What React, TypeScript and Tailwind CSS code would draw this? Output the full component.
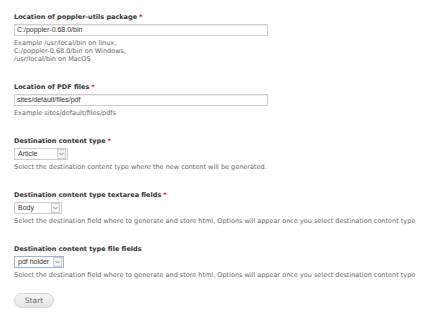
import React from "react";

const labelCls =
  "block font-['DejaVu_Sans',sans-serif] font-bold text-[6.5px] leading-[9px] text-[#333] mb-[2px]";
const descCls =
  "font-['DejaVu_Sans',sans-serif] text-[6.5px] leading-[8px] text-[#666] mt-[3px]";

function Req() {
  return <span className="text-[#e00] ml-[2px]">*</span>;
}

function Chevron() {
  return (
    <svg width="5" height="4" viewBox="0 0 5 4" fill="none" stroke="#777" strokeWidth="0.8">
      <polyline points="0.5,1 2.5,3 4.5,1" />
    </svg>
  );
}

function FakeSelect({ value, width, focused = false }: { value: string; width: string; focused?: boolean }) {
  return (
    <div
      className={
        "flex items-center h-[12px] bg-white border " +
        (focused ? "border-[#9fb6d0] " : "border-[#cfcfcf] ") +
        width
      }
    >
      <span className="flex-1 pl-[3px] font-['Liberation_Sans',Arial,sans-serif] text-[7px] leading-[10px] text-[#333] whitespace-nowrap">
        {value}
      </span>
      <span className="flex items-center justify-center w-[9px] h-[10px] mr-[1px] border border-[#cfcfcf] bg-[#f3f3f3]">
        <Chevron />
      </span>
    </div>
  );
}

function TextInput({ value }: { value: string }) {
  return (
    <div className="flex items-center w-[254px] h-[12px] bg-white border border-[#cfcfcf] shadow-[inset_0_1px_1px_rgba(0,0,0,0.08)]">
      <span className="pl-[2px] font-['Liberation_Sans',Arial,sans-serif] text-[7px] leading-[10px] text-[#333]">
        {value}
      </span>
    </div>
  );
}

export default function App() {
  return (
    <div className="w-[440px] h-[320px] bg-white overflow-hidden pl-[14px] pt-[13px]">
      <div className="flex flex-col">
        <div className="mb-[20px]">
          <label className={labelCls}>
            Location of poppler-utils package<Req />
          </label>
          <TextInput value="C:/poppler-0.68.0/bin" />
          <div className={descCls}>
            Example /usr/local/bin on linux,
            <br />
            C:/poppler-0.68.0/bin on Windows,
            <br />
            /usr/local/bin on MacOS
          </div>
        </div>

        <div className="mb-[20px]">
          <label className={labelCls}>
            Location of PDF files<Req />
          </label>
          <TextInput value="sites/default/files/pdf" />
          <div className={descCls}>Example sites/default/files/pdfs</div>
        </div>

        <div className="mb-[20px]">
          <label className={labelCls}>
            Destination content type<Req />
          </label>
          <FakeSelect value="Article" width="w-[54px]" />
          <div className={descCls}>
            Select the destination content type where the new content will be generated.
          </div>
        </div>

        <div className="mb-[20px]">
          <label className={labelCls}>
            Destination content type textarea fields<Req />
          </label>
          <FakeSelect value="Body" width="w-[48px]" />
          <div className={descCls}>
            Select the destination field where to generate and store html, Options will appear once you select
            destination content type
          </div>
        </div>

        <div>
          <label className={labelCls}>Destination content type file fields</label>
          <FakeSelect value="pdf holder" width="w-[50px]" focused />
          <div className={descCls}>
            Select the destination field where to generate and store html, Options will appear once you select
            destination content type
          </div>
        </div>

        <div className="flex mt-[14px]">
          <button className="flex items-center justify-center w-[40px] h-[15px] rounded-full border border-[#d4d4d4] bg-gradient-to-b from-[#f6f6f6] to-[#e4e4e4] font-['DejaVu_Sans',sans-serif] text-[7.5px] leading-[13px] text-[#666]">
            Start
          </button>
        </div>
      </div>
    </div>
  );
}
